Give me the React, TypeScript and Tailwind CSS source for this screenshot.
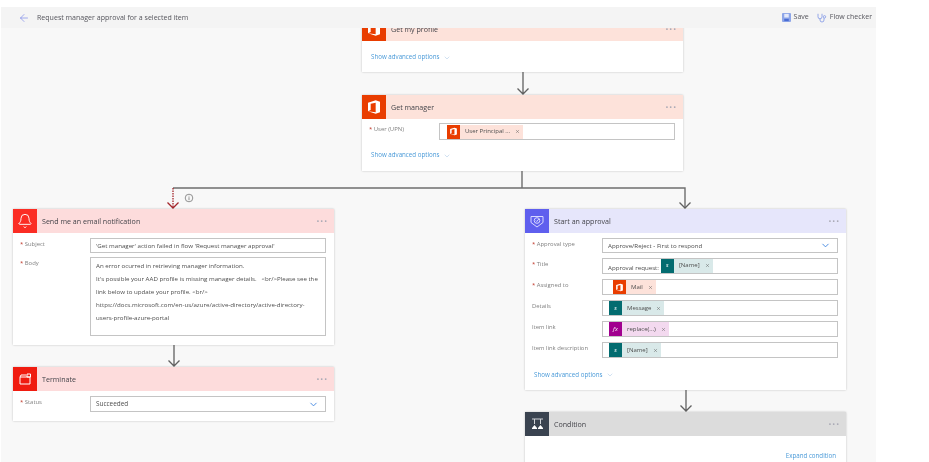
import React from "react";
import { ArrowLeft, Bell, ChevronDown, X } from "lucide-react";

const Office = ({ s = 16 }: { s?: number }) => (
  <svg width={s} height={s} viewBox="0 0 24 24" fill="none">
    <path d="M3 5.500 14.500 2 21 4v16l-6.500 2L3 18.500l11.500 1.500V5.500L7 7.200v9.300l-4 2z" fill="#fff" />
  </svg>
);

const Arrow = ({ h, color = "#616161" }: { h: number; color?: string }) => (
  <svg width="16" height={h} viewBox={`0 0 16 ${h}`} fill="none" stroke={color} strokeWidth="1.300">
    <path d={`M8 0V${h - 1}M2.500 ${h - 6.500}L8 ${h - 1}l5.500-5.500`} />
  </svg>
);

const Dots = () => <span className="ml-auto mr-[6px] text-[10px] leading-none tracking-[1px] text-[#a8a8b4] font-bold">···</span>;

type CardProps = {
  title: string;
  band: string;
  tile: string;
  icon: React.ReactNode;
  children?: React.ReactNode;
  className?: string;
};

const Card = ({ title, band, tile, icon, children, className = "" }: CardProps) => (
  <section className={`w-[321px] bg-white shadow-[0_0_2px_rgba(0,0,0,0.22)] ${className}`}>
    <header className={`flex h-6 items-center ${band}`}>
      <div className={`flex h-6 w-6 items-center justify-center ${tile}`}>{icon}</div>
      <span className="ml-[5px] pt-[1px] text-[7.100px] text-[#44444a]">{title}</span>
      <Dots />
    </header>
    {children}
  </section>
);

const Advanced = ({ className = "" }: { className?: string }) => (
  <div className={`flex items-center gap-[4px] text-[6.200px] leading-none text-[#4a9ad8] ${className}`}>
    Show advanced options <ChevronDown size={8} strokeWidth={1.2} color="#8ab4dc" />
  </div>
);

const Row = ({ label, req, className = "", children }: { label: string; req?: boolean; className?: string; children: React.ReactNode }) => (
  <div className={`flex ${className}`}>
    <div className="w-[77px] shrink-0 pl-[7px] pt-[2px] text-[5.900px] leading-[9px] text-[#808080]">
      {req && <span className="text-[#c0392b]">* </span>}
      {label}
    </div>
    {children}
  </div>
);

const Field = ({ h, children, className = "" }: { h: string; children?: React.ReactNode; className?: string }) => (
  <div className={`flex w-[236px] items-center border border-[#c4c4c4] bg-white text-[6.150px] text-[#4d4d4d] ${h} ${className}`}>{children}</div>
);

const Token = ({ tile, band, glyph, label, className = "" }: { tile: string; band: string; glyph: React.ReactNode; label: string; className?: string }) => (
  <span className={`flex h-[14px] items-center gap-[5px] pr-[3px] ${band} ${className}`}>
    <span className={`flex h-[14px] w-[13px] items-center justify-center text-[6px] italic text-white ${tile}`}>{glyph}</span>
    <span className="text-[6px] text-[#4d4d4d]">{label}</span>
    <X size={5} strokeWidth={2} color="#555" />
  </span>
);

const Teal = (label: string, className = "") => <Token tile="bg-[#036c70]" band="bg-[#d9e9e9]" glyph="s" label={label} className={className} />;

export default function App() {
  return (
    <div className="h-[462px] w-[929px] overflow-hidden bg-white pt-[7px] blur-[0.6px]" style={{ fontFamily: '"Open Sans", "Noto Sans", sans-serif' }}>
      <div className="ml-[1px] flex h-[455px] w-[875px] flex-col bg-[#f8f8f8]">
        <header className="z-10 flex h-[21px] shrink-0 items-center bg-[#f4f4f4] pl-[17px] pr-[4px] text-[#55555c]">
          <ArrowLeft size={12} strokeWidth={1.2} color="#6a78e8" />
          <span className="ml-[7px] text-[7.050px]">Request manager approval for a selected item</span>
          <div className="ml-auto flex items-center gap-[8px] text-[7px]">
            <span className="flex items-center gap-[3px]">
              <svg width="9" height="9" viewBox="0 0 10 10"><rect width="10" height="10" rx="1" fill="#8ea6e8" /><rect x="2.500" y="1" width="5" height="4" fill="#e4e9fa" /><rect x="2.500" y="6.500" width="5" height="2.500" fill="#4a6cd4" /></svg>
              Save
            </span>
            <span className="flex items-center gap-[3px]">
              <svg width="10" height="10" viewBox="0 0 10 10" fill="none" stroke="#7f95e6" strokeWidth="0.8"><path d="M1 .8v3a2 2 0 0 0 4 0v-3M3 5.800v1.200a2 2 0 0 0 4 0V5" /><circle cx="7.500" cy="3.800" r="1.200" /></svg>
              Flow checker
            </span>
          </div>
        </header>

        <div className="min-h-0 flex-1 overflow-hidden">
          <div className="ml-[361px] mt-[-11px] flex w-[321px] flex-col items-center">
            <Card title="Get my profile" band="bg-[#fde2da]" tile="bg-[#e93d00]" icon={<Office />}>
              <Advanced className="h-[31px] pl-[9px] pt-[2px]" />
            </Card>
            <div className="flex h-[23px] items-start"><Arrow h={23} /></div>
            <Card title="Get manager" band="bg-[#fde2da]" tile="bg-[#e93d00]" icon={<Office />}>
              <Row label="User (UPN)" req className="pt-[4px]">
                <Field h="h-[17px]" className="pl-[7px]">
                  <Token tile="bg-[#e93d00]" band="bg-[#fde2da]" glyph={<Office s={9} />} label="User Principal ..." />
                </Field>
              </Row>
              <Advanced className="h-[31px] pl-[9px]" />
            </Card>
          </div>

          <svg width="875" height="38" viewBox="0 0 875 38" fill="none" className="block">
            <path d="M521 0V17M172 17H684V36" stroke="#6e6e6e" strokeWidth="1.400" />
            <path d="M172 17V36" stroke="#a4262c" strokeWidth="1.300" strokeDasharray="1.500 1" />
            <path d="M166.500 31.500 172 37l5.500-5.500" stroke="#a4262c" strokeWidth="1.300" />
            <path d="M678.500 31.500 684 37l5.500-5.500" stroke="#616161" strokeWidth="1.300" />
            <circle cx="188" cy="27" r="3.800" stroke="#666" strokeWidth="0.700" />
            <path d="M188 26.200v3M188 24.800v.7" stroke="#666" strokeWidth="0.700" />
          </svg>

          <div className="flex items-start">
            <div className="ml-[12px] flex w-[321px] flex-col items-center">
              <Card title="Send me an email notification" band="bg-[#fddcdc]" tile="bg-[#fb2d24]" icon={<Bell size={16} strokeWidth={1.4} color="#fff" />}>
                <div className="flex flex-col gap-[4px] pb-[9px] pt-[5px]">
                  <Row label="Subject" req>
                    <Field h="h-[15px]" className="pl-[5px]">'Get manager' action failed in flow 'Request manager approval'</Field>
                  </Row>
                  <Row label="Body" req>
                    <Field h="h-[79px]" className="items-start whitespace-pre pl-[5px] pr-[2px] pt-[1px] text-[6.050px] leading-[13px]">
                      {"An error ocurred in retrieving manager information.\nIt's possible your AAD profile is missing manager details.   <br/>Please see the\nlink below to update your profile. <br/>\nhttps://docs.microsoft.com/en-us/azure/active-directory/active-directory-\nusers-profile-azure-portal"}
                    </Field>
                  </Row>
                </div>
              </Card>
              <div className="flex h-[22px] items-start"><Arrow h={22} /></div>
              <Card
                title="Terminate"
                band="bg-[#fddcdc]"
                tile="bg-[#f01c10]"
                icon={<svg width="14" height="14" viewBox="0 0 14 14" fill="none" stroke="#fff" strokeWidth="1"><path d="M2 5h10v7H2zM2 5l1-2h5M9 2h3.500v3H9z" /></svg>}
              >
                <Row label="Status" req className="pb-[9px] pt-[5px]">
                  <Field h="h-[16px]" className="justify-between pl-[5px] pr-[6px] text-[6.400px]">
                    Succeeded <ChevronDown size={11} strokeWidth={2} color="#3f86e0" />
                  </Field>
                </Row>
              </Card>
            </div>

            <div className="ml-[191px] flex w-[321px] flex-col items-center">
              <Card
                title="Start an approval"
                band="bg-[#e6e6fb]"
                tile="bg-[#5f5fee]"
                icon={<svg width="16" height="16" viewBox="0 0 16 16" fill="none" stroke="#d9d9ff" strokeWidth="1"><path d="M2 3.500h12v6L8 14 2 9.500z" /><circle cx="8" cy="7.500" r="2.800" /><path d="m6.800 7.500 1 1 2-2.500" /></svg>}
              >
                <div className="flex flex-col gap-[5px] pt-[5px]">
                  <Row label="Approval type" req>
                    <Field h="h-[15px]" className="justify-between pl-[5px] pr-[6px]">
                      Approve/Reject - First to respond <ChevronDown size={11} strokeWidth={2} color="#3f86e0" />
                    </Field>
                  </Row>
                  <Row label="Title" req>
                    <Field h="h-[16px]" className="gap-[2px] pl-[5px]">
                      <span className="pt-[4px]">Approval request:</span>
                      {Teal("[Name]", "-mt-[1px]")}
                    </Field>
                  </Row>
                  <Row label="Assigned to" req>
                    <Field h="h-[16px]" className="pl-[10px]">
                      <Token tile="bg-[#e93d00]" band="bg-[#fde2da]" glyph={<Office s={9} />} label="Mail" />
                    </Field>
                  </Row>
                  <Row label="Details">
                    <Field h="h-[16px]" className="pl-[6px]">{Teal("Message")}</Field>
                  </Row>
                  <Row label="Item link">
                    <Field h="h-[16px]" className="pl-[6px]">
                      <Token tile="bg-[#a1008f]" band="bg-[#f3d9ef]" glyph="fx" label="replace(...)" />
                    </Field>
                  </Row>
                  <Row label="Item link description">
                    <Field h="h-[16px]" className="pl-[6px]">{Teal("[Name]")}</Field>
                  </Row>
                </div>
                <Advanced className="h-[32px] pl-[9px] pt-[2px]" />
              </Card>
              <div className="flex h-[22px] items-start"><Arrow h={22} /></div>
              <Card
                title="Condition"
                band="bg-[#dcdcdc]"
                tile="bg-[#3a4350]"
                icon={<svg width="15" height="15" viewBox="0 0 15 15" fill="none"><path d="M2 2h11M4.500 2v5M10.500 2v5" stroke="#cfd2d6" strokeWidth="1" /><path d="M2 11l2.500-3L7 11v1H2zM8 11l2.500-3 2.500 3v1H8z" fill="#fff" /></svg>}
              >
                <div className="flex h-[30px] items-end justify-end pb-[6px] pr-[10px] text-[6.200px] text-[#4a9ad8]">Expand condition</div>
              </Card>
            </div>
          </div>
        </div>
      </div>
    </div>
  );
}
